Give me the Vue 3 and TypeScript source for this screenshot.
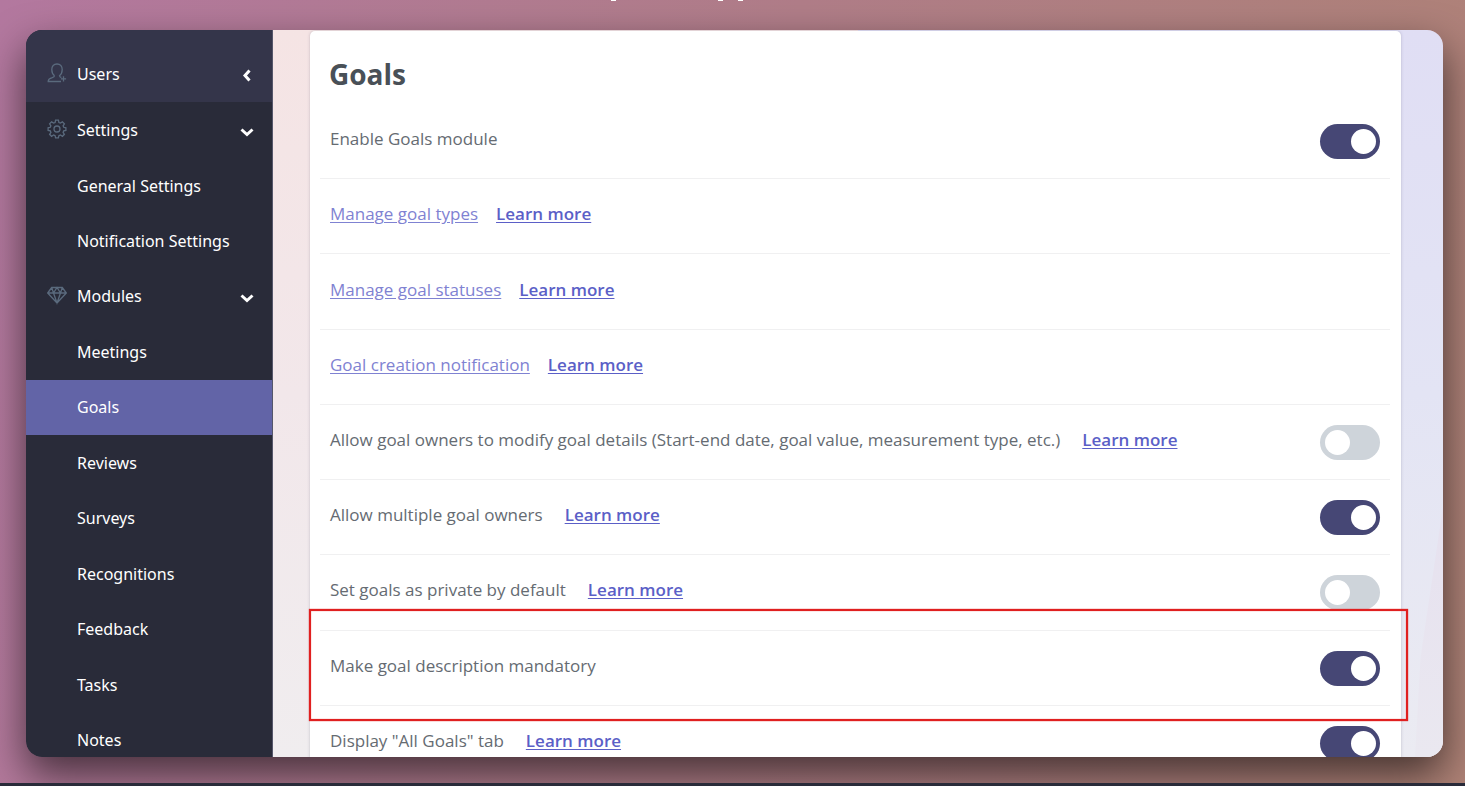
<script setup lang="ts">
import { ref } from 'vue'

interface Setting {
  id: string
  label: string
  link?: boolean
  learn?: boolean
  toggle?: boolean
  on?: boolean
  marked?: boolean
}

const settingsItems = ['General Settings', 'Notification Settings']
const moduleItems = ['Meetings', 'Goals', 'Reviews', 'Surveys', 'Recognitions', 'Feedback', 'Tasks', 'Notes']
const active = ref('Goals')

const rows = ref<Setting[]>([
  { id: 'enable', label: 'Enable Goals module', toggle: true, on: true },
  { id: 'types', label: 'Manage goal types', link: true, learn: true },
  { id: 'statuses', label: 'Manage goal statuses', link: true, learn: true },
  { id: 'notification', label: 'Goal creation notification', link: true, learn: true },
  {
    id: 'modify',
    label: 'Allow goal owners to modify goal details (Start-end date, goal value, measurement type, etc.)',
    learn: true,
    toggle: true,
    on: false,
  },
  { id: 'multiple', label: 'Allow multiple goal owners', learn: true, toggle: true, on: true },
  { id: 'private', label: 'Set goals as private by default', learn: true, toggle: true, on: false },
  { id: 'mandatory', label: 'Make goal description mandatory', toggle: true, on: true, marked: true },
  { id: 'all', label: 'Display "All Goals" tab', learn: true, toggle: true, on: true },
])
</script>

<template>
  <div class="page">
    <div class="marks" aria-hidden="true"><i class="m1"></i><i class="m2"></i><i class="m3"></i></div>
    <div class="window">
      <nav class="sidebar">
        <button type="button" class="head users">
          <svg class="icon" viewBox="0 0 20 20">
            <path d="M7.500 12.800C5.700 11.500 4.800 9.400 4.800 6.500 4.800 3 6.700 1 10 1s5.200 2 5.200 5.500c0 2.900-.9 5-2.700 6.300.1 1 .8 1.400 1.900 1.700M7.500 12.800c0 1.500-1.700 1.700-3.600 2.300-1.800.6-2.700 1.500-2.700 3.400H14M16.500 13.300v5.200M13.900 15.900h5.200" />
          </svg>
          <span>Users</span>
          <svg class="chev" viewBox="0 0 14 14"><path d="M9.500 1.500 5 6.500l4.500 5" /></svg>
        </button>
        <button type="button" class="head">
          <svg class="icon" viewBox="0 0 20 20">
            <circle cx="10" cy="10" r="3" />
            <path d="M8.600 1.200h2.800l.5 2.300 1.500.6 2-1.200 2 2-1.300 1.900.6 1.500 2.200.5v2.600l-2.200.5-.6 1.500 1.300 1.900-2 2-2-1.300-1.500.7-.5 2.200H8.600l-.5-2.200-1.500-.7-2 1.300-2-2 1.300-1.900-.6-1.500-2.200-.5V8.800l2.200-.5.600-1.500-1.300-1.900 2-2 2 1.200 1.500-.6z" />
          </svg>
          <span>Settings</span>
          <svg class="chev" viewBox="0 0 14 14"><path d="m1.500 4.500 5.500 5 5.500-5" /></svg>
        </button>
        <ul class="sub">
          <li v-for="item in settingsItems" :key="item"><a href="#" @click.prevent="active = item">{{ item }}</a></li>
        </ul>
        <button type="button" class="head">
          <svg class="icon" viewBox="0 0 20 20">
            <path d="M4.700 2.500h10.600L19.300 8 10 18 .7 8zM.7 8h18.600M4.700 2.500 6.500 8 10 18l3.500-10 1.800-5.500M6.500 8 10 2.500 13.500 8" />
          </svg>
          <span>Modules</span>
          <svg class="chev" viewBox="0 0 14 14"><path d="m1.500 4.500 5.500 5 5.500-5" /></svg>
        </button>
        <ul class="sub modules">
          <li v-for="item in moduleItems" :key="item" :class="{ active: item === active }">
            <a href="#" @click.prevent="active = item">{{ item }}</a>
          </li>
        </ul>
      </nav>
      <main class="main">
        <section class="card">
          <h1>Goals</h1>
          <div class="list">
            <div v-for="row in rows" :key="row.id" class="row" :class="{ marked: row.marked }">
              <a v-if="row.link" href="#" class="manage" @click.prevent>{{ row.label }}</a>
              <label v-else :for="row.id" class="label">{{ row.label }}</label>
              <a v-if="row.learn" href="#" class="learn" @click.prevent>Learn more</a>
              <input v-if="row.toggle" :id="row.id" v-model="row.on" type="checkbox" role="switch" class="switch" />
            </div>
          </div>
        </section>
      </main>
    </div>
    <div class="strip"></div>
  </div>
</template>

<style>
body {
  margin: 0;
  overflow: hidden;
}
</style>

<style scoped>
* {
  box-sizing: border-box;
}
.page {
  height: 100vh;
  display: flex;
  flex-direction: column;
  position: relative;
  font-family: 'Segoe UI', 'Open Sans', 'Noto Sans', sans-serif;
  background: linear-gradient(100deg, #b3789f 0%, #b07d88 50%, #ae8276 100%);
}
.marks i {
  position: absolute;
  top: 0;
  width: 5px;
  height: 1px;
  background: #fff;
}
.marks .m1 {
  left: 611px;
}
.marks .m2 {
  left: 718px;
}
.marks .m3 {
  left: 738px;
}
.window {
  flex: 1;
  min-height: 0;
  margin: 30px 22px 26px 26px;
  display: flex;
  overflow: hidden;
  border-radius: 16px;
  box-shadow: 0 18px 40px rgba(0, 0, 0, 0.6);
}
.strip {
  position: relative;
  height: 3px;
  background: #292b39;
}
.sidebar {
  width: 247px;
  flex: none;
  background: #292b39;
  border-right: 1px solid #55566a;
  font-family: 'Segoe UI', 'Noto Sans', 'Open Sans', sans-serif;
}
.head {
  width: 100%;
  height: 56px;
  display: flex;
  align-items: center;
  padding: 0 18px 0 21px;
  border: 0;
  background: none;
  color: #fff;
  font: inherit;
  font-size: 16px;
  text-align: left;
}
.users {
  height: 72px;
  padding-top: 16px;
  background: #34354a;
}
.head span {
  flex: 1;
  margin-left: 10px;
}
.icon {
  width: 20px;
  height: 20px;
  margin-bottom: 2px;
  fill: none;
  stroke: #5a6a7d;
  stroke-width: 1.3;
}
.chev {
  width: 14px;
  height: 14px;
  margin-top: 4px;
  fill: none;
  stroke: #fff;
  stroke-width: 3;
}
.sub {
  list-style: none;
  margin: 0;
  padding: 0;
  display: grid;
  grid-auto-rows: 1fr;
  min-height: 110px;
}
.modules {
  min-height: 444px;
}
.sub a {
  height: 100%;
  display: flex;
  align-items: center;
  padding-left: 51px;
  color: #fff;
  font-size: 16px;
  text-decoration: none;
}
.active {
  background: #6264a7;
}
.main {
  flex: 1;
  min-width: 0;
  position: relative;
  padding: 1px 42px 0 37px;
  background:
    linear-gradient(#f5e4e4, #f2e7ea 50%, #f0edef) left / 50% 100% no-repeat,
    linear-gradient(#e0def4, #e3e4f4 50%, #ebebf2) right / 50% 100% no-repeat;
}
.main::before {
  content: '';
  position: absolute;
  right: 0;
  bottom: 0;
  width: 28px;
  height: 250px;
  background: linear-gradient(#e6e1ef, #eae8f0);
  clip-path: polygon(100% 0, 100% 100%, 0 100%, 20% 60%);
}
.card {
  position: relative;
  padding: 0 11px 0 10px;
  background: #fff;
  border-radius: 5px;
  box-shadow: 0 0 3px rgba(80, 80, 110, 0.3);
}
h1 {
  margin: 0;
  height: 73px;
  padding: 25px 9px 0;
  color: #495057;
  font-size: 28px;
  line-height: 36px;
  font-weight: 700;
}
.list {
  display: grid;
  grid-auto-rows: 1fr;
  min-height: 677px;
}
.row {
  position: relative;
  display: flex;
  align-items: center;
  padding: 0 10px;
  border-bottom: 1px solid #f0f0f1;
  color: #656b72;
  font-size: 17px;
  line-height: 24px;
}
.label,
.manage,
.learn {
  margin-bottom: 4px;
}
.manage {
  color: #7f82d2;
  text-underline-offset: 2px;
}
.learn {
  margin-left: 22px;
  color: #5b5fc7;
  font-weight: 600;
  text-underline-offset: 2px;
}
.manage + .learn {
  margin-left: 18px;
}
.switch {
  appearance: none;
  flex: none;
  width: 60px;
  height: 35px;
  margin: 1px 0 0 auto;
  padding: 5px;
  display: flex;
  border-radius: 18px;
  background: #ced4da;
}
.switch::before {
  content: '';
  width: 25px;
  height: 25px;
  border-radius: 50%;
  background: #fff;
}
.switch:checked {
  justify-content: flex-end;
  padding-right: 4px;
  background: #464775;
}
.marked::after {
  content: '';
  position: absolute;
  inset: -22px -18px -16px -11px;
  border: 2px solid #e02020;
  box-shadow: 0 0 1px #e02020, inset 0 0 1px #e02020;
  pointer-events: none;
}
</style>
